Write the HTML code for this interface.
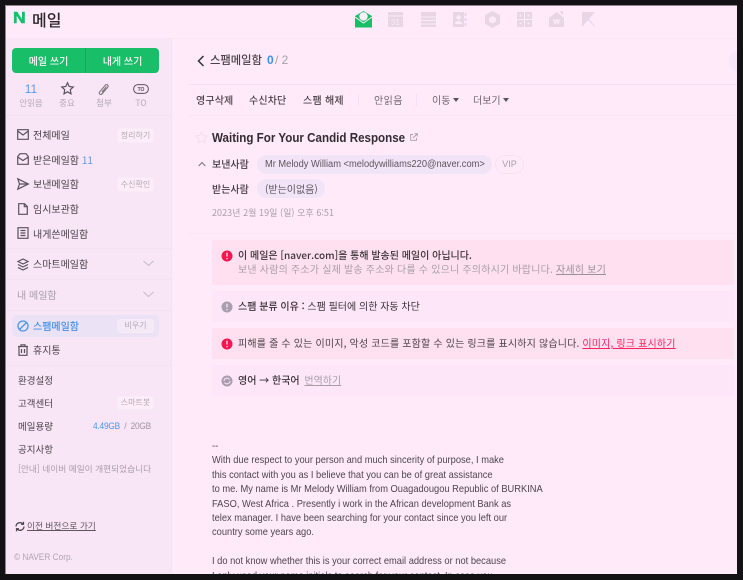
<!DOCTYPE html>
<html lang="ko"><head><meta charset="utf-8"><title>메일</title>
<style>
*{box-sizing:border-box}
html,body{margin:0;padding:0;width:743px;height:580px;overflow:hidden;background:#141114}
body{position:relative;font-family:"Noto Sans CJK KR","Liberation Sans",sans-serif;color:#3a3338}
.a{position:absolute;white-space:nowrap}
.t{position:absolute;white-space:nowrap;font-family:"Noto Sans CJK KR","Liberation Sans",sans-serif;font-size:10px;line-height:14px;color:#4a4248}
.l{position:absolute;height:1px}
.tag{position:absolute;width:37px;height:15px;border-radius:3px;background:#fcedf9;border:1px solid #f8eaf6;color:#b3a9b2;font:8px/13px "Noto Sans CJK KR",sans-serif;text-align:center}
svg{position:absolute;overflow:visible}
.i{fill:none;stroke:#5a525a;stroke-width:1.2}
.body{position:absolute;left:212px;top:439px;font:400 10.5px/14.4px "Liberation Sans",sans-serif;color:#4d454c;white-space:nowrap;transform:scaleX(.887);transform-origin:left top}
</style></head><body>
<div class="a" style="left:5px;top:5px;width:732px;height:569px;background:#ffeafa;border-top:1px solid #8f858c;border-left:1px solid #8f858c;overflow:hidden"></div>
<div class="a" style="left:6px;top:38px;width:166px;height:536px;background:#f8e5f6;border-right:1px solid #f4e1f1"></div>
<div class="l" style="left:6px;top:38px;width:731px;background:#f8e6f5"></div>

<div class="a" style="left:13px;top:8px;font:900 16px/22px 'Liberation Sans',sans-serif;color:#19bf68;-webkit-text-stroke:.5px #19bf68;transform:scaleX(1.1);transform-origin:left">N</div>
<div class="t" style="left:32px;top:8px;font-size:16px;line-height:22px;font-weight:500;color:#2c262b">메일</div>

<svg style="left:355px;top:11px" width="17" height="17" viewBox="0 0 17 17"><path d="M0 5L8.500 0L17 5V16.500H0Z" fill="#19bf68"/><circle cx="8.500" cy="5.500" r="4.200" fill="#fdeefa"/><path d="M0 6L8.500 12L17 6" fill="none" stroke="#fdeefa" stroke-width="1"/></svg>
<svg style="left:388px;top:12px" width="15" height="15" viewBox="0 0 15 15"><path d="M0 0H15V15H0Z" fill="#e8d6e5"/><path d="M0 4H15" stroke="#fdeaf9"/><text x="7.500" y="13" text-anchor="middle" font-family="Liberation Sans" font-size="8" fill="#fbeaf7">31</text></svg>
<svg style="left:421px;top:12px" width="15" height="15" viewBox="0 0 15 15"><path d="M0 0H15V15H0Z" fill="#e8d6e5"/><path d="M0 5H15M0 8.500H15M0 12H15" stroke="#fdeaf9"/></svg>
<svg style="left:453px;top:12px" width="15" height="15" viewBox="0 0 15 15"><path d="M0 0H11V15H0Z" fill="#e8d6e5"/><circle cx="5.500" cy="5.500" r="2.200" fill="#fdeaf9"/><path d="M2 12C2 8 9 8 9 12Z" fill="#fdeaf9"/><path d="M12.500 1V4M12.500 6V9M12.500 11V14" stroke="#e8d6e5" stroke-width="2"/></svg>
<svg style="left:485px;top:11px" width="15" height="17" viewBox="0 0 15 17"><path d="M7.500 0L15 4.200V12.800L7.500 17L0 12.800V4.200Z" fill="#e8d6e5"/><path d="M7.500 5L11 7V10.500L7.500 12.500L4 10.500V7Z" fill="#fdeaf9"/></svg>
<svg style="left:517px;top:12px" width="15" height="15" viewBox="0 0 15 15"><path d="M0 0H7V7H0ZM8 0H15V7H8ZM0 8H7V15H0ZM8 8H15V15H8Z" fill="#e8d6e5"/><path d="M2.500 2.500H4.500V4.500H2.500ZM10.500 2.500H12.500V4.500H10.500ZM2.500 10.500H4.500V12.500H2.500ZM10.500 10.500H12.500V12.500H10.500Z" fill="#fdeaf9"/></svg>
<svg style="left:549px;top:11px" width="15" height="16" viewBox="0 0 15 16"><path d="M7.500 1L15 7V16H0V7Z" fill="#e8d6e5"/><path d="M11.500 0H14V4L11.500 2Z" fill="#e8d6e5"/><text x="7.500" y="13" text-anchor="middle" font-family="Liberation Sans" font-size="7" font-weight="bold" fill="#fdeaf9">₩</text></svg>
<svg style="left:582px;top:12px" width="13" height="15" viewBox="0 0 13 15"><path d="M0 0H13L7 7L13 14V15L6 8L0 15Z" fill="#e8d6e5"/></svg>

<div class="a" style="left:12px;top:48px;width:147px;height:25px;background:#19bf68;border-radius:4px"></div>
<div class="a" style="left:85px;top:48px;width:1px;height:25px;background:#15a95c"></div>
<div class="t" style="left:12px;top:54px;width:73px;text-align:center;color:#fdf3fa;font-weight:500;font-size:10px">메일 쓰기</div>
<div class="t" style="left:86px;top:54px;width:73px;text-align:center;color:#fdf3fa;font-weight:500;font-size:10px">내게 쓰기</div>

<div class="a" style="left:12px;top:82px;width:38px;text-align:center;font:12px/14px 'Liberation Sans',sans-serif;color:#5b9ae8">11</div>
<svg style="left:61px;top:82px" width="13" height="13" viewBox="0 0 13 13"><path class="i" d="M6.500 .8L8.200 4.500L12.200 5L9.300 7.700L10 11.800L6.500 9.800L3 11.800L3.700 7.700L.8 5L4.800 4.500Z"/></svg>
<svg style="left:98px;top:83px" width="12" height="13" viewBox="0 0 12 13"><path d="M3.500 11.500L9.800 4.200C11 2.600 8.900 .6 7.500 2L1.500 9C.5 10.500 2.300 12.300 3.600 11L9 5M4 9L8.500 3.600" fill="none" stroke="#7b7279" stroke-width="1"/></svg>
<svg style="left:133px;top:84px" width="16" height="10" viewBox="0 0 16 10"><rect x=".6" y=".6" width="14.800" height="8.800" rx="4.400" fill="none" stroke="#5a525a" stroke-width="1"/><text x="8" y="7" text-anchor="middle" font-family="Liberation Sans" font-size="5" font-weight="bold" fill="#5a525a">TO</text></svg>
<div class="t" style="left:12px;top:96px;width:38px;text-align:center;font-size:8.500px;color:#b5abb4">안읽음</div>
<div class="t" style="left:48px;top:96px;width:38px;text-align:center;font-size:8.500px;color:#b5abb4">중요</div>
<div class="t" style="left:85px;top:96px;width:38px;text-align:center;font-size:8.500px;color:#b5abb4">첨부</div>
<div class="t" style="left:122px;top:96px;width:38px;text-align:center;font-size:8.500px;color:#b5abb4">TO</div>
<div class="l" style="left:6px;top:115px;width:165px;background:#f3e1f1"></div>

<svg style="left:17px;top:129px" width="12" height="11" viewBox="0 0 12 11"><path class="i" d="M.7.7H11.300V10.300H.7ZM.7 2L6 6L11.300 2"/></svg>
<div class="t" style="left:33px;top:128px">전체메일</div>
<div class="tag" style="left:117px;top:128px;height:15px">정리하기</div>
<svg style="left:17px;top:153px" width="12" height="12" viewBox="0 0 12 12"><path class="i" d="M.7 3.500L3 .7H9L11.300 3.500V11.300H.7ZM.7 4L6 7.500L11.300 4"/></svg>
<div class="t" style="left:33px;top:153px">받은메일함 <span style="color:#5b9ae8">11</span></div>
<svg style="left:17px;top:178px" width="12" height="12" viewBox="0 0 12 12"><path class="i" d="M.8.8L11.300 6L.8 11.200L2.500 6ZM2.500 6H11"/></svg>
<div class="t" style="left:33px;top:177px">보낸메일함</div>
<div class="tag" style="left:117px;top:177px;height:15px">수신확인</div>
<svg style="left:18px;top:203px" width="10" height="12" viewBox="0 0 10 12"><path class="i" d="M.7.7H6.500L9.300 3.500V11.300H.7ZM6.300.7V3.700H9.300"/></svg>
<div class="t" style="left:33px;top:202px">임시보관함</div>
<svg style="left:17px;top:227px" width="12" height="12" viewBox="0 0 12 12"><path class="i" d="M1 .7H11V11.300H1ZM3.500 3.500H8.500M3.500 6H8.500M3.500 8.500H8.500"/></svg>
<div class="t" style="left:33px;top:227px">내게쓴메일함</div>
<div class="l" style="left:6px;top:248px;width:165px;background:#f3e1f1"></div>
<svg style="left:17px;top:258px" width="12" height="13" viewBox="0 0 12 13"><path class="i" d="M6 1L11 3.500L6 6L1 3.500ZM1 6.500L6 9L11 6.500M1 9.500L6 12L11 9.500" stroke-width="1.400"/></svg>
<div class="t" style="left:33px;top:257px">스마트메일함</div>
<svg style="left:143px;top:260px" width="11" height="7" viewBox="0 0 11 7"><path d="M.5 1L5.500 5.500L10.500 1" fill="none" stroke="#c5bbc4"/></svg>
<div class="l" style="left:6px;top:279px;width:165px;background:#f3e1f1"></div>
<div class="t" style="left:17px;top:288px;color:#a89ea7">내 메일함</div>
<svg style="left:143px;top:291px" width="11" height="7" viewBox="0 0 11 7"><path d="M.5 1L5.500 5.500L10.500 1" fill="none" stroke="#c5bbc4"/></svg>
<div class="l" style="left:6px;top:310px;width:165px;background:#f3e1f1"></div>
<div class="a" style="left:12px;top:315px;width:147px;height:22px;background:#ebe2f6;border-radius:5px"></div>
<svg style="left:17px;top:320px" width="12" height="12" viewBox="0 0 12 12"><circle cx="6" cy="6" r="5" fill="none" stroke="#4a97ee" stroke-width="1.300"/><path d="M2.500 9.500L9.500 2.500" stroke="#4a97ee" stroke-width="1.300"/></svg>
<div class="t" style="left:33px;top:319px;color:#3f8fe8;font-weight:500">스팸메일함</div>
<div class="tag" style="left:117px;top:319px;height:14px;background:#f4eaf7;line-height:12px">비우기</div>
<svg style="left:17px;top:344px" width="12" height="12" viewBox="0 0 12 12"><path class="i" d="M1 2.500H11M4 2.500V.8H8V2.500M2 2.500V11.300H10V2.500M4.500 5V9M7.500 5V9"/></svg>
<div class="t" style="left:33px;top:343px">휴지통</div>
<div class="l" style="left:6px;top:365px;width:165px;background:#f3e1f1"></div>

<div class="t" style="left:18px;top:373px;font-size:9.500px">환경설정</div>
<div class="t" style="left:18px;top:396px;font-size:9.500px">고객센터</div>
<div class="tag" style="left:117px;top:396px;height:14px;line-height:12px">스마트봇</div>
<div class="t" style="left:18px;top:419px;font-size:9.500px">메일용량</div>
<div class="t" style="left:93px;top:419px;font-size:9px;font-family:'Liberation Sans',sans-serif;color:#9d949c;letter-spacing:-.2px;transform:scaleX(.92);transform-origin:left"><span style="color:#4a97ee">4.49GB</span>&nbsp; /&nbsp; 20GB</div>
<div class="t" style="left:18px;top:442px;font-size:9.500px">공지사항</div>
<div class="t" style="left:18px;top:462px;font-size:8.700px;color:#a89ea7">[안내] 네이버 메일이 개편되었습니다</div>
<svg style="left:15px;top:521px" width="10" height="11" viewBox="0 0 10 11"><path d="M1 5.500A4 4 0 0 1 8 3M9 5.500A4 4 0 0 1 2 8M8.500 .8V3.300H6M1.500 10.200V7.700H4" fill="none" stroke="#4a424a" stroke-width="1.200"/></svg>
<div class="t" style="left:27px;top:519px;font-size:8.700px;text-decoration:underline;color:#5e555d">이전 버전으로 가기</div>
<div class="a" style="left:14px;top:551px;font:9px/13px 'Liberation Sans',sans-serif;color:#b0a6af;transform:scaleX(.92);transform-origin:left">© NAVER Corp.</div>

<svg style="left:197px;top:55px" width="8" height="12" viewBox="0 0 8 12"><path d="M6.500 1L1.500 6L6.500 11" fill="none" stroke="#3a3338" stroke-width="1.500"/></svg>
<div class="t" style="left:210px;top:53px;font-size:11.300px;line-height:15px;color:#4a4248;font-weight:500">스팸메일함</div>
<div class="a" style="left:267px;top:53px;font:bold 12px/15px 'Liberation Sans',sans-serif;color:#3f8fe8">0</div>
<div class="a" style="left:275px;top:53px;font:12px/15px 'Liberation Sans',sans-serif;color:#a89ea7">/ 2</div>
<div class="a" style="left:729px;top:51px;width:16px;height:20px;border-radius:10px;background:#f8e5f6"></div>
<div class="l" style="left:188px;top:84px;width:549px;background:#f5dff0"></div>

<div class="t" style="left:196px;top:93px;font-weight:500;letter-spacing:.15px">영구삭제</div>
<div class="t" style="left:249px;top:93px;font-weight:500;letter-spacing:.15px">수신차단</div>
<div class="t" style="left:303px;top:93px;font-weight:500;letter-spacing:.25px">스팸 해제</div>
<div class="a" style="left:358px;top:94px;width:1px;height:12px;background:#f5dff0"></div>
<div class="t" style="left:374px;top:93px;color:#6e656d;letter-spacing:.4px">안읽음</div>
<div class="a" style="left:416px;top:94px;width:1px;height:12px;background:#f5dff0"></div>
<div class="t" style="left:432px;top:93px;color:#6e656d">이동</div>
<div class="a" style="left:453px;top:98px;border:3px solid transparent;border-top:4px solid #5a525a;border-bottom:0"></div>
<div class="t" style="left:473px;top:93px;color:#6e656d">더보기</div>
<div class="a" style="left:503px;top:98px;border:3px solid transparent;border-top:4px solid #5a525a;border-bottom:0"></div>
<div class="l" style="left:188px;top:115px;width:549px;background:#f8e6f5"></div>

<svg style="left:195px;top:131px" width="13" height="13" viewBox="0 0 13 13"><path d="M6.500 .8L8.200 4.500L12.200 5L9.300 7.700L10 11.800L6.500 9.800L3 11.800L3.700 7.700L.8 5L4.800 4.500Z" fill="none" stroke="#f0deec"/></svg>
<div class="a" style="left:212px;top:131px;font:bold 12.500px/15px 'Liberation Sans',sans-serif;color:#332c32;transform:scaleX(.928);transform-origin:left">Waiting For Your Candid Response</div>
<svg style="left:410px;top:133px" width="8" height="8" viewBox="0 0 8 8"><path d="M3 1.500H.7V7.300H6.500V5M3 5L7 1M4.500 .7H7.300V3.500" fill="none" stroke="#a89ea7" stroke-width=".9"/></svg>
<svg style="left:198px;top:161px" width="8" height="6" viewBox="0 0 8 6"><path d="M.7 5L4 1.500L7.300 5" fill="none" stroke="#7b7279"/></svg>
<div class="t" style="left:212px;top:157px;color:#423a41;font-weight:500">보낸사람</div>
<div class="a" style="left:257px;top:155px;width:235px;height:19px;background:#f0e4f6;border-radius:10px"></div>
<div class="a" style="left:265px;top:158px;font:10px/13px 'Liberation Sans',sans-serif;color:#5e555d;transform:scaleX(.93);transform-origin:left">Mr Melody William &lt;melodywilliams220@naver.com&gt;</div>
<div class="a" style="left:495px;top:155px;width:29px;height:19px;border:1px solid #f5e2f1;border-radius:10px;text-align:center;font:9px/17px 'Liberation Sans',sans-serif;color:#a89ea7">VIP</div>
<div class="t" style="left:212px;top:182px;color:#423a41;font-weight:500">받는사람</div>
<div class="a" style="left:257px;top:179px;width:68px;height:19px;background:#f0e4f6;border-radius:10px"></div>
<div class="t" style="left:265px;top:182px;color:#5e555d">(받는이없음)</div>
<div class="t" style="left:212px;top:206px;font-size:9px;color:#a89ea7;letter-spacing:.05px">2023년 2월 19일 (일) 오후 6:51</div>
<div class="l" style="left:188px;top:233px;width:549px;background:#fbe5f5"></div>

<div class="a" style="left:212px;top:240px;width:522px;height:45px;background:#ffe0f0"></div>
<div class="a" style="left:212px;top:291px;width:522px;height:31px;background:#fce6f8"></div>
<div class="a" style="left:212px;top:328px;width:522px;height:31px;background:#ffe0f0"></div>
<div class="a" style="left:212px;top:365px;width:522px;height:31px;background:#fce6f8"></div>
<svg style="left:221px;top:250px" width="12" height="12" viewBox="0 0 12 12"><circle cx="6" cy="6" r="5.500" fill="#f7164f"/><path d="M6 2.800V6.500M6 8V9.200" stroke="#ffe9f1" stroke-width="1.300"/></svg>
<svg style="left:221px;top:301px" width="12" height="12" viewBox="0 0 12 12"><circle cx="6" cy="6" r="5.500" fill="#a89eb0"/><path d="M6 2.800V6.500M6 8V9.200" stroke="#fce6f8" stroke-width="1.300"/></svg>
<svg style="left:221px;top:338px" width="12" height="12" viewBox="0 0 12 12"><circle cx="6" cy="6" r="5.500" fill="#f7164f"/><path d="M6 2.800V6.500M6 8V9.200" stroke="#ffe9f1" stroke-width="1.300"/></svg>
<svg style="left:221px;top:375px" width="12" height="12" viewBox="0 0 12 12"><circle cx="6" cy="6" r="5.500" fill="#a89eb0"/><path d="M3 6A3 3 0 0 1 8.500 4.500M9 6A3 3 0 0 1 3.500 7.500" stroke="#fce6f8" fill="none"/></svg>

<div class="t" style="left:238px;top:248px;color:#3a3338;font-weight:500">이 메일은 [naver.com]을 통해 발송된 메일이 아닙니다.</div>
<div class="t" style="left:238px;top:262px;color:#a89ea7;letter-spacing:.2px">보낸 사람의 주소가 실제 발송 주소와 다를 수 있으니 주의하시기 바랍니다. <span style="text-decoration:underline;color:#9a909a">자세히 보기</span></div>
<div class="t" style="left:238px;top:299px;color:#3a3338"><b style="font-weight:500">스팸 분류 이유 :</b> 스팸 필터에 의한 자동 차단</div>
<div class="t" style="left:238px;top:336px;color:#4a4248;letter-spacing:.17px">피해를 줄 수 있는 이미지, 악성 코드를 포함할 수 있는 링크를 표시하지 않습니다. <span style="text-decoration:underline;color:#f7235f">이미지, 링크 표시하기</span></div>
<div class="t" style="left:238px;top:373px;color:#3a3338;font-weight:500">영어 → 한국어 <span style="text-decoration:underline;color:#a89ea7;font-weight:400;margin-left:2px">번역하기</span></div>

<div class="body">--<br>With due respect to your person and much sincerity of purpose, I make<br>this contact with you as I believe that you can be of great assistance<br>to me. My name is Mr Melody William from Ouagadougou Republic of BURKINA<br>FASO, West Africa . Presently i work in the African development Bank as<br>telex manager. I have been searching for your contact since you left our<br>country some years ago.<br><br>I do not know whether this is your correct email address or not because<br>I only used your name initials to search for your contact. In case you</div>

<div class="a" style="left:0;top:0;width:743px;height:5px;background:#141114"></div>
<div class="a" style="left:0;top:0;width:5px;height:580px;background:#141114"></div>
<div class="a" style="left:737px;top:0;width:6px;height:580px;background:#141114"></div>
<div class="a" style="left:0;top:574px;width:743px;height:6px;background:#141114"></div>
</body></html>
